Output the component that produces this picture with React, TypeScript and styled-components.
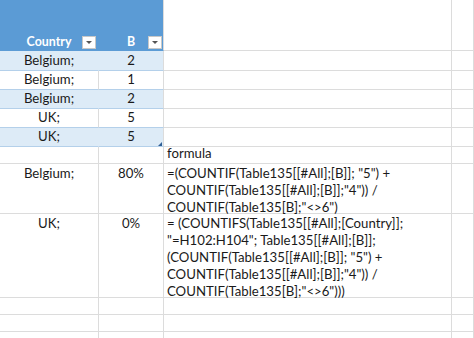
import React from 'react'
import styled, { createGlobalStyle, css } from 'styled-components'

const GlobalStyle = createGlobalStyle`
  html, body {
    margin: 0;
    padding: 0;
    background: #ffffff;
    overflow: hidden;
  }
  body {
    font-family: Lato, 'Open Sans', sans-serif;
  }
`

const gridLine = '#dcdcdc'
const bandLine = '#b4d0ea'
const headerBlue = '#5b9bd5'
const bandBlue = '#ddebf7'

const Sheet = styled.div`
  display: grid;
  grid-template-columns: 99px 65px 288px 1fr;
  grid-template-rows: 51px 20px 19px 19px 19px 19px 17px 50px 84px 17px 17px 17px;
  width: 474px;
  height: 338px;
  overflow: hidden;
  font-size: 13.2px;
  color: #1a1a1a;
`

type Kind = 'head' | 'blue' | 'white' | 'plain'

const Cell = styled.div<{ $kind?: Kind; $align?: 'left' | 'center'; $top?: boolean }>`
  position: relative;
  box-sizing: border-box;
  display: flex;
  flex-direction: column;
  justify-content: ${(p) => (p.$top ? 'flex-start' : 'flex-end')};
  align-items: ${(p) => (p.$align === 'left' ? 'flex-start' : 'center')};
  padding: ${(p) => (p.$top ? '1px 3px 0 3px' : '0 3px 1px 3px')};
  line-height: 17px;
  border-right: 1px solid ${gridLine};
  border-bottom: 1px solid ${gridLine};
  white-space: nowrap;
  ${(p) =>
    p.$kind === 'head' &&
    css`
      background: ${headerBlue};
      color: #ffffff;
      font-weight: 700;
      font-size: 12.4px;
      border-right-color: ${headerBlue};
      border-bottom-color: ${headerBlue};
      padding-bottom: 0;
    `}
  ${(p) =>
    p.$kind === 'blue' &&
    css`
      background: ${bandBlue};
      border-right-color: ${bandBlue};
      border-bottom-color: ${bandLine};
    `}
  ${(p) =>
    p.$kind === 'white' &&
    css`
      border-bottom-color: ${bandLine};
    `}
`

const EdgeCell = styled(Cell)`
  border-right-color: ${gridLine};
`

const FilterButton = styled.span<{ $right: number }>`
  position: absolute;
  right: ${(p) => p.$right}px;
  bottom: 1px;
  width: 14px;
  height: 13px;
  box-sizing: border-box;
  background: #ffffff;
  border: 1px solid #c8c8c8;
  display: flex;
  align-items: center;
  justify-content: center;

  &::after {
    content: '';
    border-left: 3px solid transparent;
    border-right: 3px solid transparent;
    border-top: 3px solid #555555;
  }
`

const ResizeHandle = styled.span`
  position: absolute;
  right: 1px;
  bottom: 0;
  width: 0;
  height: 0;
  border-left: 4px solid transparent;
  border-bottom: 4px solid #2f5f96;
`

const Formula = styled.span`
  display: block;
`

const tableRows: Array<[string, string]> = [
  ['Belgium;', '2'],
  ['Belgium;', '1'],
  ['Belgium;', '2'],
  ['UK;', '5'],
  ['UK;', '5'],
]

const belgiumFormula = [
  '=(COUNTIF(Table135[[#All];[B]]; "5") +',
  'COUNTIF(Table135[[#All];[B]];"4")) /',
  'COUNTIF(Table135[B];"<>6")',
]

const ukFormula = [
  '= (COUNTIFS(Table135[[#All];[Country]];',
  '"=H102:H104"; Table135[[#All];[B]];',
  '(COUNTIF(Table135[[#All];[B]]; "5") +',
  'COUNTIF(Table135[[#All];[B]];"4")) /',
  'COUNTIF(Table135[B];"<>6")))',
]

export default function App() {
  return (
    <>
      <GlobalStyle />
      <Sheet>
        <Cell $kind="head">
          Country
          <FilterButton $right={2} />
        </Cell>
        <EdgeCell $kind="head">
          B
          <FilterButton $right={1} />
        </EdgeCell>
        <Cell />
        <Cell />

        {tableRows.map(([country, value], i) => {
          const kind: Kind = i % 2 === 0 ? 'blue' : 'white'
          return (
            <React.Fragment key={i}>
              <Cell $kind={kind}>{country}</Cell>
              <EdgeCell $kind={kind}>
                {value}
                {i === tableRows.length - 1 && <ResizeHandle />}
              </EdgeCell>
              <Cell />
              <Cell />
            </React.Fragment>
          )
        })}

        <Cell />
        <Cell />
        <Cell $align="left">formula</Cell>
        <Cell />

        <Cell $top>Belgium;</Cell>
        <Cell $top>80%</Cell>
        <Cell $top $align="left">
          {belgiumFormula.map((line) => (
            <Formula key={line}>{line}</Formula>
          ))}
        </Cell>
        <Cell />

        <Cell $top>UK;</Cell>
        <Cell $top>0%</Cell>
        <Cell $top $align="left">
          {ukFormula.map((line) => (
            <Formula key={line}>{line}</Formula>
          ))}
        </Cell>
        <Cell />

        {[0, 1, 2].map((r) => (
          <React.Fragment key={r}>
            <Cell />
            <Cell />
            <Cell />
            <Cell />
          </React.Fragment>
        ))}
      </Sheet>
    </>
  )
}
